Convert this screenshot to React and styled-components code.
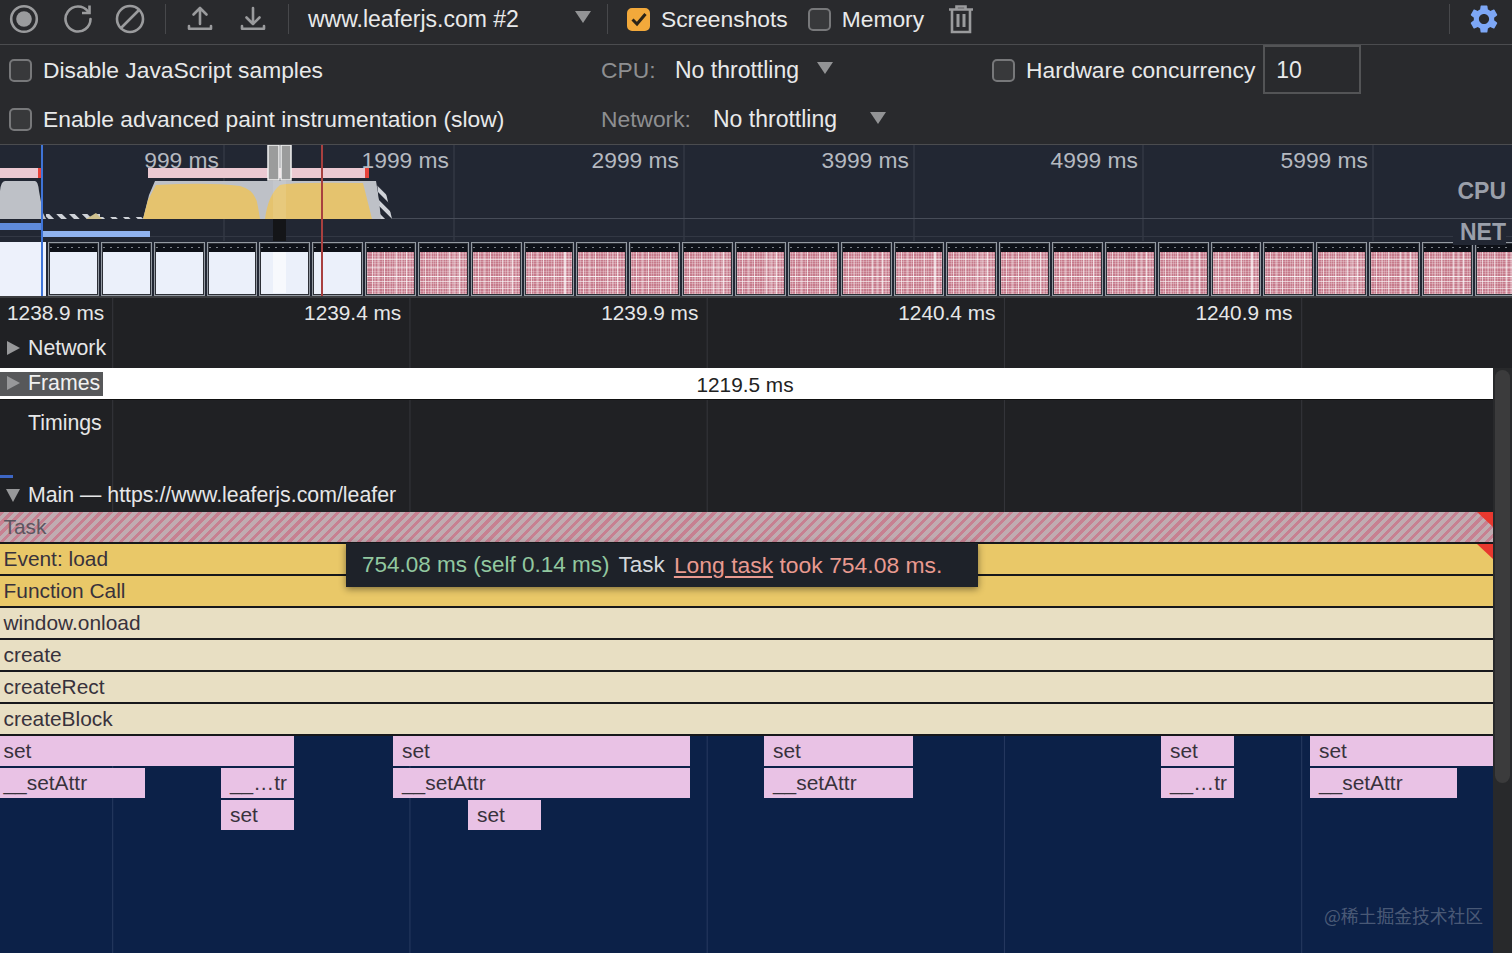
import React from "react";
import styled, { createGlobalStyle } from "styled-components";
import { MdSettings } from "react-icons/md";

const Global = createGlobalStyle`
  html, body { margin: 0; padding: 0; background: #202124; }
  * { box-sizing: border-box; }
`;

const Page = styled.div`
  position: relative;
  width: 1512px;
  height: 953px;
  overflow: hidden;
  display: flex;
  flex-direction: column;
  background: #202124;
  color: #e6e7e8;
  font-family: "Liberation Sans", Arial, sans-serif;
`;

const Toolbar = styled.div`
  height: 45px;
  flex: none;
  display: flex;
  align-items: center;
  padding: 0 11px 6px 9px;
  background: #292a2d;
  border-bottom: 1px solid #4b4c4f;
  font-size: 23px;
`;

const IconButton = styled.span`
  display: flex;
  flex: none;
  margin-left: ${(p) => p.$ml || 0}px;
  color: #9a9b9d;
`;

const Sep = styled.span`
  flex: none;
  width: 1px;
  height: 30px;
  background: #47484b;
  margin-left: ${(p) => p.$ml || 0}px;
`;

const Spacer = styled.span`
  flex: 1;
`;

const Select = styled.span`
  display: flex;
  align-items: center;
  flex: none;
  width: ${(p) => p.$w}px;
  margin-left: ${(p) => p.$ml || 0}px;
  color: #e8e9ea;
  font-size: 23px;
  white-space: nowrap;
`;

const Caret = styled.span`
  flex: none;
  width: 0;
  height: 0;
  margin-left: auto;
  margin-top: ${(p) => p.$mt || 0}px;
  border-left: 8px solid transparent;
  border-right: 8px solid transparent;
  border-top: 12px solid #929395;
`;

const Box = styled.span`
  flex: none;
  width: 23px;
  height: 23px;
  border-radius: 5px;
  display: flex;
  align-items: center;
  justify-content: center;
  margin-left: ${(p) => p.$ml || 0}px;
  border: 2px solid ${(p) => (p.$on ? "#f2a93b" : "#77787a")};
  background: ${(p) => (p.$on ? "#f2a93b" : "#38393b")};
`;

const Label = styled.span`
  flex: none;
  margin-left: ${(p) => p.$ml || 11}px;
  font-size: 22.8px;
  color: #e8e9ea;
  white-space: nowrap;
`;

const Settings = styled.div`
  height: 100px;
  flex: none;
  display: grid;
  grid-template-columns: 601px 391px 1fr;
  grid-template-rows: 50px 49px;
  background: #292a2d;
  border-bottom: 1px solid #4b4c4f;
`;

const Cell = styled.div`
  display: flex;
  align-items: center;
  padding-left: ${(p) => p.$pl || 0}px;
`;

const Muted = styled.span`
  flex: none;
  width: ${(p) => p.$w}px;
  font-size: 22.8px;
  color: #8e8f91;
`;

const NumberField = styled.div`
  width: 98px;
  height: 49px;
  margin: -2px 0 0 8px;
  padding: 2px 0 0 11px;
  display: flex;
  align-items: center;
  border: 2px solid #535456;
  font-size: 23px;
  color: #e8e9ea;
`;

const Overview = styled.div`
  position: relative;
  height: 153px;
  flex: none;
  background: #222733;
  border-bottom: 2px solid #3c3d40;
`;

const Chart = styled.svg`
  display: block;
  width: 1512px;
  height: 96px;
`;

const TickRow = styled.div`
  position: absolute;
  top: 2px;
  left: 0;
  display: flex;
`;

const Tick = styled.span`
  flex: none;
  width: ${(p) => p.$w}px;
  padding-right: 5px;
  text-align: right;
  font-size: 22.8px;
  line-height: 26px;
  color: #b5b9c0;
  white-space: nowrap;
`;

const Lane = styled.span`
  position: absolute;
  right: 6px;
  top: ${(p) => p.$top}px;
  padding-left: 7px;
  background: ${(p) => (p.$bg ? "#222733" : "transparent")};
  font-size: 23px;
  font-weight: 700;
  line-height: 26px;
  color: #9a9faa;
`;

const Strip = styled.div`
  display: flex;
  gap: 2px;
  height: 55px;
  padding-top: 1px;
`;

const FirstShot = styled.div`
  flex: none;
  width: 46px;
  background: #edf1fb;
`;

const grain = `
  linear-gradient(90deg,
    transparent 11%, rgba(255,255,255,.5) 11% 13%, transparent 13% 24%,
    rgba(255,255,255,.38) 24% 26%, transparent 26% 37%, rgba(255,255,255,.6) 37% 39%,
    transparent 39% 61%, rgba(255,255,255,.62) 61% 64%, transparent 64% 73%,
    rgba(255,255,255,.38) 73% 75%, transparent 75% 83%, rgba(255,255,255,.72) 83% 86%, transparent 86%),
  linear-gradient(0deg,
    transparent 12%, rgba(255,255,255,.42) 12% 15%, transparent 15% 28%,
    rgba(255,255,255,.48) 28% 31%, transparent 31% 40%, rgba(255,255,255,.78) 40% 44%,
    transparent 44% 62%, rgba(255,255,255,.48) 62% 65%, transparent 65% 80%,
    rgba(255,255,255,.58) 80% 83%, transparent 83%),
  repeating-linear-gradient(90deg, rgba(255,255,255,.26) 0 1px, transparent 1px 2.5px),
  repeating-linear-gradient(0deg, rgba(255,255,255,.22) 0 1px, transparent 1px 2.5px)
`;

const Shot = styled.div`
  flex: none;
  width: 50.85px;
  display: flex;
  flex-direction: column;
  border: 1px solid #949aa2;
  padding: 1px;
  background: #2c2f36;
`;

const ShotHead = styled.div`
  height: 8px;
  flex: none;
  background-color: #0e1118;
  background-image: repeating-linear-gradient(90deg, #7b7f87 0 2px, transparent 2px 7px);
  background-size: 100% 1px;
  background-position: 0 3px;
  background-repeat: no-repeat;
`;

const ShotBody = styled.div`
  flex: 1;
  background-color: ${(p) => (p.$plaid ? "#c67a8b" : "#ebf0fa")};
  background-image: ${(p) => (p.$plaid ? grain : "none")};
`;

const Marker = styled.span`
  position: absolute;
  top: 0;
  bottom: 0;
  left: ${(p) => p.$x}px;
  width: 2px;
  background: ${(p) => p.$c};
`;

const Glare = styled.span`
  position: absolute;
  left: 273px;
  width: 13px;
  top: 107px;
  height: 41px;
  background: rgba(255, 255, 255, 0.6);
`;

const Timeline = styled.div`
  flex: 1;
  display: flex;
  flex-direction: column;
  background-color: #202124;
  background-image: linear-gradient(90deg, #34353a 1px, transparent 1px);
  background-size: 297.25px 100%;
  background-position: 112.2px 0;
`;

const Ruler = styled.div`
  height: 33px;
  flex: none;
  display: flex;
`;

const RulerTick = styled.span`
  flex: none;
  width: 297.1px;
  padding-left: 7px;
  font-size: 20.8px;
  line-height: 30px;
  color: #e6e7e8;
`;

const Track = styled.div`
  height: ${(p) => p.$h}px;
  flex: none;
  display: flex;
  align-items: ${(p) => (p.$top ? "flex-start" : "center")};
  padding-top: ${(p) => p.$pt || 0}px;
  padding-bottom: ${(p) => p.$pb || 0}px;
  padding-left: 7px;
  font-size: 21.3px;
  color: #e6e7e8;
`;

const TrackLabel = styled.span`
  margin-left: ${(p) => p.$ml || 8}px;
  white-space: nowrap;
`;

const Tri = styled.span`
  flex: none;
  width: 0;
  height: 0;
  border-top: 7px solid transparent;
  border-bottom: 7px solid transparent;
  border-left: 13px solid #97989a;
`;

const TriDown = styled.span`
  flex: none;
  width: 0;
  height: 0;
  margin-left: -1px;
  border-left: 7px solid transparent;
  border-right: 7px solid transparent;
  border-top: 13px solid #97989a;
`;

const FramesRow = styled.div`
  position: relative;
  height: 32px;
  width: 1493px;
  flex: none;
  display: flex;
  align-items: center;
  justify-content: center;
  padding: 2px 3px 0 0;
  background: #fff;
  color: #222;
  font-size: 20.8px;
  border-bottom: 1px solid #111;
`;

const FramesLabel = styled.div`
  position: absolute;
  left: 0;
  top: 4px;
  height: 24px;
  width: 103px;
  padding: 0 0 2px 7px;
  display: flex;
  align-items: center;
  background: #57585a;
  color: #f1f1f1;
  font-size: 21.3px;
`;

const TimingMark = styled.div`
  position: relative;
  height: 3px;
  width: 13px;
  flex: none;
  margin-top: -3px;
  background: #3d66c4;
`;

const Flame = styled.div`
  flex: 1;
  display: flex;
  flex-direction: column;
  width: 1493px;
`;

const Deep = styled.div`
  flex: 1;
  display: flex;
  flex-direction: column;
  background-color: #0c2148;
  background-image: linear-gradient(90deg, #26395f 1px, transparent 1px);
  background-size: 297.25px 100%;
  background-position: 112.2px 0;
`;

const Row = styled.div`
  position: relative;
  height: 32px;
  flex: none;
  background: ${(p) => (p.$gap ? "#17181b" : "transparent")};
`;

const Bar = styled.div`
  position: absolute;
  top: 0;
  left: ${(p) => p.$x || 0}px;
  width: ${(p) => p.$w}px;
  height: 30px;
  display: flex;
  align-items: center;
  padding-left: ${(p) => p.$pl ?? 9}px;
  font-size: 20.9px;
  white-space: nowrap;
  overflow: hidden;
  color: ${(p) => p.$fg || "#38323c"};
  background: ${(p) => p.$bg};
  ${(p) =>
    p.$flag &&
    `&::after {
      content: "";
      position: absolute;
      right: 0;
      top: 0;
      width: 16px;
      height: 15px;
      background: #e8382f;
      clip-path: polygon(0 0, 100% 0, 100% 100%);
    }`}
`;

const Scroll = styled.div`
  position: absolute;
  left: 1493px;
  top: 368px;
  bottom: 0;
  width: 19px;
  background: #28292b;
`;

const Thumb = styled.div`
  margin: 2px 2px 0;
  height: 413px;
  border-radius: 8px;
  background: #3b3b3c;
`;

const Tooltip = styled.div`
  position: absolute;
  left: 346px;
  top: 543px;
  width: 632px;
  height: 44px;
  padding-left: 16px;
  display: flex;
  align-items: center;
  background: #1e2229;
  box-shadow: 0 2px 7px rgba(0, 0, 0, 0.45);
  font-size: 22.5px;
  white-space: nowrap;
`;

const Took = styled.span`
  color: #92c8a0;
`;

const Name = styled.span`
  margin-left: 9px;
  color: #d5d8dd;
`;

const Warn = styled.span`
  margin-left: 9px;
  font-size: 22.9px;
  color: #e99a90;
`;

const WarnLink = styled.span`
  text-decoration: underline;
  text-underline-offset: 3px;
`;

const Watermark = styled.div`
  position: absolute;
  left: 1324px;
  top: 904px;
  font-family: "Noto Sans CJK SC", "Liberation Sans", sans-serif;
  font-size: 17.8px;
  line-height: 22px;
  color: rgba(255, 255, 255, 0.27);
  white-space: nowrap;
`;

const icon = { width: 30, height: 30, viewBox: "0 0 30 30", fill: "none", stroke: "currentColor", strokeWidth: 2.6, strokeLinecap: "round", strokeLinejoin: "round" };

const RecordIcon = () => (
  <svg {...icon}>
    <circle cx="15" cy="15" r="12.8" />
    <circle cx="15" cy="15" r="7.8" fill="currentColor" stroke="none" />
  </svg>
);
const ReloadIcon = () => (
  <svg {...icon}>
    <path d="M25 7.5A12.5 12.5 0 1 0 27.5 15" />
    <path d="M26.5 1.5v7.5H19" strokeLinecap="butt" strokeLinejoin="miter" />
  </svg>
);
const ClearIcon = () => (
  <svg {...icon}>
    <circle cx="15" cy="15" r="13" />
    <path d="M6 24L24 6" />
  </svg>
);
const UploadIcon = () => (
  <svg {...icon}>
    <path d="M15 20V4M8.5 10.5L15 4l6.5 6.5" />
    <path d="M4 22v2.8h22V22" />
  </svg>
);
const DownloadIcon = () => (
  <svg {...icon}>
    <path d="M15 4v16M8.5 13.5L15 20l6.5-6.5" />
    <path d="M4 22v2.8h22V22" />
  </svg>
);
const TrashIcon = () => (
  <svg {...icon} strokeLinecap="butt" strokeLinejoin="miter">
    <path d="M3 5.5h24M10.5 5.5V2.5h9v3" />
    <path d="M6 6v22h18V6" />
    <path d="M12 10v13M18 10v13" strokeWidth="3" />
  </svg>
);
const CheckIcon = () => (
  <svg width="18" height="18" viewBox="0 0 18 18" fill="none" stroke="#2b2418" strokeWidth="3">
    <path d="M2.5 9.5l4.5 4.5 8.5-10" />
  </svg>
);

const OverviewChart = () => (
  <Chart viewBox="0 0 1512 96">
    <defs>
      <pattern id="hatch" width="9" height="9" patternUnits="userSpaceOnUse" patternTransform="rotate(-45)">
        <rect width="9" height="9" fill="#222733" />
        <rect width="4" height="9" fill="#cfd2d8" />
      </pattern>
    </defs>
    {[224, 454, 684, 914, 1143, 1373].map((x) => (
      <line key={x} x1={x} x2={x} y1="0" y2="96" stroke="#3b404c" strokeWidth="1" />
    ))}
    <line x1="0" x2="1512" y1="73.5" y2="73.5" stroke="#474c58" />
    <line x1="0" x2="1512" y1="91.5" y2="91.5" stroke="#333844" />
    <rect x="0" y="23" width="38" height="10" fill="#ebc9d2" />
    <rect x="38" y="23" width="3" height="10" fill="#e8423a" />
    <rect x="148" y="23" width="217" height="10" fill="#ebc9d2" />
    <rect x="365" y="23" width="4" height="10" fill="#e8423a" />
    <path d="M0 74V46Q1 36 5 36H35Q38 36 39 46L43 68L46 74Z" fill="#bec1c7" />
    <path d="M143 74L149 50L155 36H376L380 60L390 74Z" fill="#bec1c7" />
    <path d="M143 74L148 55L156 40Q210 37 240 41Q256 45 258 62L260 74Z" fill="#e5c36e" />
    <path d="M265 74Q268 50 280 40Q290 37 363 38L372 74Z" fill="#e5c36e" />
    <path d="M377 37L385 44L392 74H381Z" fill="url(#hatch)" />
    <rect x="46" y="69" width="54" height="5" fill="url(#hatch)" />
    <rect x="100" y="72" width="43" height="2" fill="url(#hatch)" />
    <path d="M86 74L96 68L102 74Z" fill="#cfc08e" />
    <rect x="273" y="0" width="13" height="74" fill="rgba(255,255,255,.1)" />
    <rect x="273" y="74" width="13" height="22" fill="#141518" />
    <rect x="0" y="78" width="42" height="7" fill="#5f8bdb" />
    <rect x="41" y="86" width="109" height="6" fill="#8fb2ef" />
    <rect x="268" y="0" width="11" height="35" fill="#9b9c9c" stroke="#f2f2f2" strokeWidth="1.5" />
    <rect x="281" y="0" width="10" height="35" fill="#9b9c9c" stroke="#f2f2f2" strokeWidth="1.5" />
  </Chart>
);

const TICKS = [
  [224, "999 ms"],
  [230, "1999 ms"],
  [230, "2999 ms"],
  [230, "3999 ms"],
  [229, "4999 ms"],
  [230, "5999 ms"],
];

const PINK = "#e9c2e5";
const CREAM = "#e8dfc3";
const GOLD = "#e9c868";
const STRIPES = "repeating-linear-gradient(135deg, #c78091 0 3px, #c0acb1 3px 7px)";

const SET_ROW = [[0, 294, 3.5], [393, 297], [764, 149], [1161, 73], [1310, 183]];
const ATTR_ROW = [
  [0, 145, 3.5, "__setAttr"],
  [221, 73, 9, "__…tr"],
  [393, 297, 9, "__setAttr"],
  [764, 149, 9, "__setAttr"],
  [1161, 73, 9, "__…tr"],
  [1310, 147, 9, "__setAttr"],
];

export default function App() {
  return (
    <Page>
      <Global />
      <Toolbar>
        <IconButton><RecordIcon /></IconButton>
        <IconButton $ml={24}><ReloadIcon /></IconButton>
        <IconButton $ml={22}><ClearIcon /></IconButton>
        <Sep $ml={20} />
        <IconButton $ml={19}><UploadIcon /></IconButton>
        <IconButton $ml={23}><DownloadIcon /></IconButton>
        <Sep $ml={20} />
        <Select $ml={19} $w={283}>
          www.leaferjs.com #2
          <Caret $mt={-4} />
        </Select>
        <Sep $ml={16} />
        <Box $ml={19} $on><CheckIcon /></Box>
        <Label>Screenshots</Label>
        <Box $ml={20} />
        <Label>Memory</Label>
        <IconButton $ml={22}><TrashIcon /></IconButton>
        <Spacer />
        <Sep />
        <IconButton $ml={17}>
          <MdSettings size={34} color="#7da7f6" />
        </IconButton>
      </Toolbar>

      <Settings>
        <Cell $pl={9}><Box /><Label>Disable JavaScript samples</Label></Cell>
        <Cell>
          <Select $w={232}>
            <Muted $w={74}>CPU:</Muted>
            No throttling
            <Caret $mt={-4} />
          </Select>
        </Cell>
        <Cell><Box /><Label>Hardware concurrency</Label><NumberField>10</NumberField></Cell>
        <Cell $pl={9}><Box /><Label>Enable advanced paint instrumentation (slow)</Label></Cell>
        <Cell>
          <Select $w={285}>
            <Muted $w={112}>Network:</Muted>
            No throttling
            <Caret $mt={-4} />
          </Select>
        </Cell>
        <Cell />
      </Settings>

      <Overview>
        <OverviewChart />
        <TickRow>
          {TICKS.map(([w, t]) => <Tick key={t} $w={w}>{t}</Tick>)}
        </TickRow>
        <Lane $top={33}>CPU</Lane>
        <Lane $top={74} $bg>NET</Lane>
        <Strip>
          <FirstShot />
          {Array.from({ length: 28 }, (_, i) => (
            <Shot key={i}>
              <ShotHead />
              <ShotBody $plaid={i >= 6} />
            </Shot>
          ))}
        </Strip>
        <Glare />
        <Marker $x={41} $c="#3f74d8" />
        <Marker $x={321} $c="#a8403f" />
      </Overview>

      <Timeline>
        <Ruler>
          {["1238.9 ms", "1239.4 ms", "1239.9 ms", "1240.4 ms", "1240.9 ms"].map((t) => (
            <RulerTick key={t}>{t}</RulerTick>
          ))}
        </Ruler>
        <Track $h={37} $pb={3}><Tri /><TrackLabel>Network</TrackLabel></Track>
        <FramesRow>
          <FramesLabel><Tri /><TrackLabel>Frames</TrackLabel></FramesLabel>
          1219.5 ms
        </FramesRow>
        <Track $h={78} $top $pt={11}><TrackLabel $ml={21}>Timings</TrackLabel></Track>
        <TimingMark />
        <Track $h={34}><TriDown /><TrackLabel>Main — https://www.leaferjs.com/leafer</TrackLabel></Track>
        <Flame>
          <Row $gap><Bar $w={1493} $pl={3.5} $bg={STRIPES} $fg="#5d5660" $flag>Task</Bar></Row>
          <Row $gap><Bar $w={1493} $pl={3.5} $bg={GOLD} $flag>Event: load</Bar></Row>
          <Row $gap><Bar $w={1493} $pl={3.5} $bg={GOLD}>Function Call</Bar></Row>
          <Row $gap><Bar $w={1493} $pl={3.5} $bg={CREAM}>window.onload</Bar></Row>
          <Row $gap><Bar $w={1493} $pl={3.5} $bg={CREAM}>create</Bar></Row>
          <Row $gap><Bar $w={1493} $pl={3.5} $bg={CREAM}>createRect</Bar></Row>
          <Row $gap><Bar $w={1493} $pl={3.5} $bg={CREAM}>createBlock</Bar></Row>
          <Deep>
            <Row>
              {SET_ROW.map(([x, w, pl]) => <Bar key={x} $x={x} $w={w} $pl={pl} $bg={PINK}>set</Bar>)}
            </Row>
            <Row>
              {ATTR_ROW.map(([x, w, pl, t]) => <Bar key={x} $x={x} $w={w} $pl={pl} $bg={PINK}>{t}</Bar>)}
            </Row>
            <Row>
              <Bar $x={221} $w={73} $bg={PINK}>set</Bar>
              <Bar $x={468} $w={73} $bg={PINK}>set</Bar>
            </Row>
          </Deep>
        </Flame>
      </Timeline>

      <Scroll><Thumb /></Scroll>
      <Tooltip>
        <Took>754.08 ms (self 0.14 ms)</Took>
        <Name>Task</Name>
        <Warn><WarnLink>Long task</WarnLink> took 754.08 ms.</Warn>
      </Tooltip>
      <Watermark>@稀土掘金技术社区</Watermark>
    </Page>
  );
}
